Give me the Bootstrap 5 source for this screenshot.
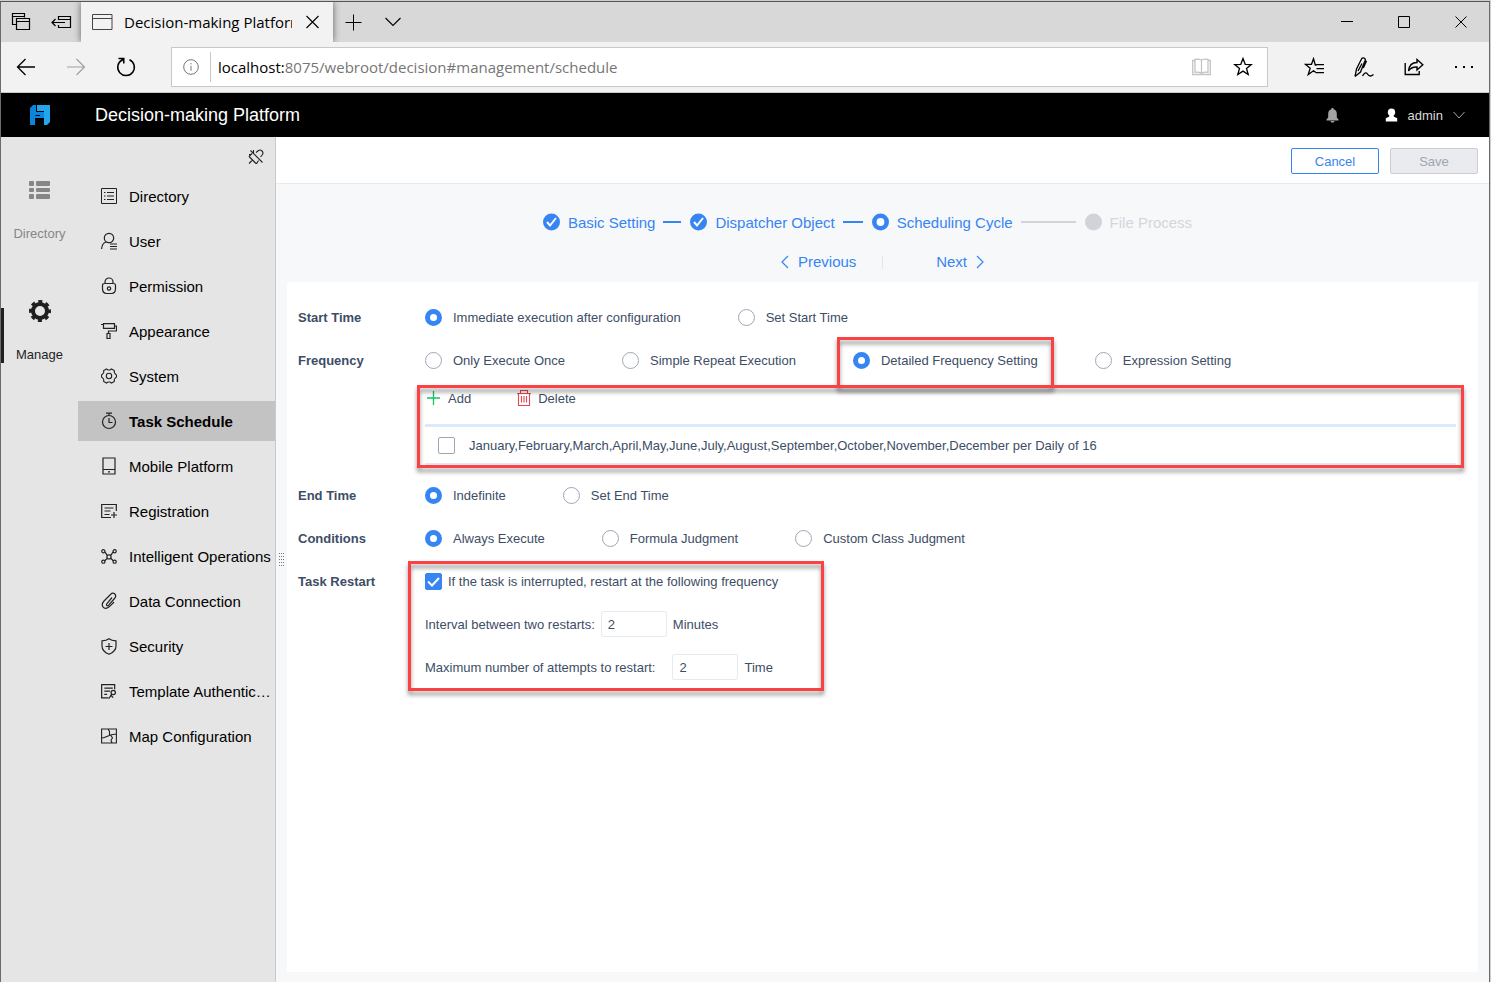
<!DOCTYPE html>
<html lang="en">
<head>
<meta charset="utf-8">
<meta name="viewport" content="width=device-width, initial-scale=1">
<title>Decision-making Platform</title>
<link href="https://cdn.jsdelivr.net/npm/bootstrap@5.3.0/dist/css/bootstrap.min.css" rel="stylesheet">
<style>
  :root { --blue: #3685f2; --ink: #3d4d66; --frame: #6b6b6b; }
  body { font-family: "Liberation Sans", Arial, sans-serif; font-size: 13px; line-height: 21px; color: var(--ink); background: #cfd0ce; padding: 1px 1px 0 0; }
  svg { display: block; flex: none; }
  svg:not([fill]) { fill: none; }
  svg:not([stroke]) { stroke: currentColor; }
  button { color: inherit; font: inherit; }
  .bare { background: none; border: 0; padding: 0; display: flex; align-items: center; justify-content: center; }
  .app-window { border: 1px solid var(--frame); border-top-color: #555; border-bottom: 0; }
  /* browser chrome */
  .chrome { font-family: "Open Sans", "Noto Sans", sans-serif; color: #000; }
  .tab-strip { background: #d8d8d8; height: 40px; }
  .tab-tools { width: 80px; }
  .tab-tools .bare { width: 40px; }
  .page-tab { width: 252px; background: #f2f2f2; box-shadow: 0 0 7px rgba(0,0,0,.55); clip-path: inset(0 -8px); padding: 0 13px 0 11px; font-size: 15px; }
  .page-tab .tab-title { flex: 1 1 0; min-width: 0; overflow: hidden; white-space: nowrap; margin: 0 13px 0 11px; }
  .strip-btn { width: 40px; }
  .win-btn { width: 57px; }
  .tool-bar { background: #f2f2f2; height: 51px; border-bottom: 1px solid #c8c8c8; }
  .nav-btn { width: 50px; }
  .address { border: 1px solid #c8c8c8; background: #fff; height: 40px; margin-left: 20px; margin-right: 21px; font-size: 15px; }
  .address .info { width: 39px; height: 30px; border-right: 1px solid #c8c8c8; color: #767676; margin-right: 7px; }
  .address input { border: 0; outline: 0; padding: 0; color: #767676; flex: 1 1 0; min-width: 0; background: none; }
  .address .bare { width: 41px; }
  /* application */
  .app-bar { background: #000; color: #fff; height: 44px; padding: 0 24px 0 29px; }
  .app-bar h1 { font-size: 18px; line-height: 24px; margin: 0 0 0 44px; }
  .bell { margin-right: 46px; }
  .user-menu { color: #d9d9d9; gap: 10px; }
  .rail { width: 77px; background: #e5e5e5; padding-top: 41px; gap: 55px; }
  .rail a { color: #868686; gap: 21px; text-decoration: none; position: relative; }
  .rail a.active { color: #1f1f1f; }
  .rail a.active::before { content: ""; position: absolute; left: 0; top: 9px; width: 3px; height: 55px; background: #1f1f1f; }
  .side { width: 198px; background: #e5e5e5; border-right: 1px solid #c9c9c9; }
  .side-head { height: 39px; padding-right: 11px; }
  .side ul { gap: 5px; }
  .side li a { height: 40px; padding-left: 23px; gap: 12px; font-size: 15px; color: #000; text-decoration: none; white-space: nowrap; }
  .side li a svg { color: #222; }
  .side li a.active { background: #c3c3c3; font-weight: bold; }
  .content-area { background: #f7f8fa; position: relative; }
  .grip { position: absolute; left: 2px; top: 416px; color: #777; }
  .action-bar { background: #fff; height: 47px; border-bottom: 1px solid #e8eaed; padding: 2px 11px 0 0; gap: 11px; }
  .action-bar .btn { width: 88px; height: 26px; padding: 0; font-size: 13px; line-height: 25px; border-radius: 2px; }
  .btn-cancel { color: var(--blue); border: 1px solid var(--blue); background: #fff; }
  .btn-save, .btn-save:disabled { color: #9ea6b2; border: 1px solid #ccced6; background: #eaebef; opacity: 1; }
  .steps { padding: 24px 30px 0 0; font-size: 15px; color: var(--blue); }
  .steps li { height: 28px; gap: 8px; }
  .steps .link-line { height: 2px; background: var(--blue); margin: 0 9px 0 8px; }
  .line-s { width: 18px; } .line-m { width: 20px; } .line-l { width: 55px; }
  .steps .todo { color: #d3d6dc; }
  .steps .link-line.line-l { background: #d0d3da; }
  .pager { margin: 12px 0 6px; font-size: 15px; color: var(--blue); }
  .pager .bare { width: 102px; height: 28px; gap: 9px; line-height: 24px; }
  .pager .rule { width: 1px; height: 13px; background: #e3e5e9; }
  .sheet { background: #fff; margin: 0 11px 10px; padding: 22px 22px 22px 11px; }
  .form-rows { gap: 17px; }
  .f-row > .f-label { width: 127px; font-weight: bold; line-height: 27px; height: 26px; flex: none; }
  .f-line { height: 26px; }
  .opts { gap: 57px; }
  .opt { gap: 11px; position: relative; white-space: nowrap; }
  input[type=radio], input[type=checkbox] { appearance: none; margin: 0; width: 17px; height: 17px; border: 1px solid #9ea6b5; background: #fff center/100% no-repeat; flex: none; }
  input[type=radio] { border-radius: 50%; }
  input[type=radio]:checked { border: 5px solid var(--blue); }
  input[type=checkbox] { border-radius: 2px; }
  input[type=checkbox]:checked { border-color: var(--blue); background-color: var(--blue); background-image: url("data:image/svg+xml,%3Csvg xmlns='http://www.w3.org/2000/svg' viewBox='0 0 15 15'%3E%3Cpath d='M2 7.5l4 4L13 4' fill='none' stroke='white' stroke-width='2'/%3E%3C/svg%3E"); }
  .freq-list { margin-top: 12px; position: relative; }
  .freq-tools { height: 26px; margin-bottom: 13px; gap: 45px; }
  .freq-tools .bare { gap: 6px; }
  .freq-item { border-top: 3px solid #dce9fb; border-bottom: 2px solid #dce9fb; height: 41px; padding-left: 13px; gap: 14px; }
  .restart { position: relative; gap: 17px; }
  .restart .f-line { gap: 6px; }
  .restart .wide-colon { margin-right: 11px; }
  .num { width: 66px; height: 26px; border: 1px solid #e8eaed; border-radius: 2px; padding: 0 6px; color: var(--ink); font-size: 13px; }
  /* callout frames laid over the form */
  .callout { position: absolute; border: 3px solid #fb4141; pointer-events: none; filter: drop-shadow(0 4px 2px rgba(0,0,0,.42)); z-index: 2; }
  .callout-option { inset: -13px -16px -17px -16px; }
  .callout-list { inset: 0 -8px -3px -8px; }
  .callout-restart { inset: -7px -46px -11px -17px; }
</style>
</head>
<body class="min-vh-100 d-flex flex-column">
<div class="app-window flex-grow-1 d-flex flex-column">
  <div class="chrome">
    <div class="tab-strip d-flex">
      <div class="tab-tools d-flex">
        <button class="bare" aria-label="Tabs set aside"><svg width="20" height="20" viewBox="0 0 20 20" stroke-width="1.2"><path d="M5.500 12.500h-4v-11h12v4M1.500 4.500h12M5.500 6.500h13v11h-13zM5.500 9.500h13"/></svg></button>
        <button class="bare" aria-label="Set tabs aside"><svg width="22" height="20" viewBox="0 0 22 20" stroke-width="1.2"><path d="M8.500 8V4.500h12v11h-12V13M8.500 7.500h12M15 10.500H2M5.500 7L2 10.500 5.500 14"/></svg></button>
      </div>
      <div class="page-tab d-flex align-items-center">
        <svg width="21" height="18" viewBox="0 0 21 18" stroke="#444"><path d="M.5 1.500h19.500v15H.5zM.5 5.500h19.500"/></svg>
        <span class="tab-title">Decision-making Platform</span>
        <button class="bare" aria-label="Close tab"><svg width="15" height="14" viewBox="0 0 15 14" stroke-width="1.100"><path d="M1.500 1l12 12M13.500 1l-12 12"/></svg></button>
      </div>
      <button class="bare strip-btn" aria-label="New tab"><svg width="17" height="17" viewBox="0 0 17 17"><path d="M8.500.5v16M.5 8.500h16"/></svg></button>
      <button class="bare strip-btn" aria-label="Tab previews"><svg width="16" height="10" viewBox="0 0 16 10" stroke-width="1.100"><path d="M.5 1L8 8.500 15.500 1"/></svg></button>
      <div class="ms-auto d-flex">
        <button class="bare win-btn" aria-label="Minimize"><svg width="12" height="12" viewBox="0 0 12 12"><path d="M0 5.500h12"/></svg></button>
        <button class="bare win-btn" aria-label="Maximize"><svg width="12" height="12" viewBox="0 0 12 12"><path d="M.5.5h11v11H.5z"/></svg></button>
        <button class="bare win-btn" aria-label="Close"><svg width="12" height="12" viewBox="0 0 12 12"><path d="M.5.5l11 11M11.500.5l-11 11"/></svg></button>
      </div>
    </div>
    <div class="tool-bar d-flex align-items-center">
      <button class="bare nav-btn" aria-label="Back"><svg width="20" height="18" viewBox="0 0 20 18" stroke-width="1.300"><path d="M19 9H1.500M9.500 1l-8 8 8 8"/></svg></button>
      <button class="bare nav-btn" aria-label="Forward"><svg width="20" height="18" viewBox="0 0 20 18" stroke="#a0a0a0" stroke-width="1.200"><path d="M1 9h17.500M10.500 1l8 8-8 8"/></svg></button>
      <button class="bare nav-btn" aria-label="Refresh"><svg width="20" height="20" viewBox="0 0 20 20" stroke-width="1.500"><path d="M13.500 2.700a8.300 8.300 0 1 1-7.500.3M2.500 1.500h5.300v5M7.500 1.800L5.500 4"/></svg></button>
      <div class="address flex-grow-1 d-flex align-items-center">
        <div class="info d-flex align-items-center justify-content-center"><svg width="16" height="16" viewBox="0 0 16 16"><circle cx="8" cy="8" r="7.300"/><path d="M8 6.800v5M8 4v1.400"/></svg></div>
        <label for="url">localhost:</label><input id="url" type="text" value="8075/webroot/decision#management/schedule">
        <button class="bare" aria-label="Reading view"><svg width="19" height="18" viewBox="0 0 19 18" stroke="#c4c4c4" stroke-width="1.300"><path d="M9.500 2.500v13M9.500 2C7.500 1 5 1 3 1.500v12.800c2.500-.4 4.500-.1 6.500.9 2-1 4-1.300 6.500-.9V1.500C14 1 11.500 1 9.500 2zM3 2.500H.7v14h17.600v-14H16"/></svg></button>
        <button class="bare me-1" aria-label="Add to favorites"><svg width="20" height="20" viewBox="0 0 20 20" stroke-width="1.300"><path d="M10 1.500l2.200 5.800 6.100.3-4.800 3.900 1.700 6-5.200-3.400-5.200 3.400 1.700-6-4.800-3.900 6.100-.3z"/></svg></button>
      </div>
      <button class="bare nav-btn" aria-label="Hub"><svg width="21" height="20" viewBox="0 0 21 20" stroke-width="1.300"><path d="M12.500 8h-1.200L9.500 1.700 7.500 7.300H1.300l4.900 4-2 6.200 5.300-3.800 2 1.400M11 7.700h9M12.500 11.700H20M11.500 15.700H20"/></svg></button>
      <button class="bare nav-btn" aria-label="Notes"><svg width="22" height="22" viewBox="0 0 22 22" stroke-width="1.300"><path d="M2 20.500L3.500 13 8.500 3c1-2 4.500-1 3.700 1.200L7.500 16 2 20.500M9 7.500L5 15M12 4.500l1.300 1-3 6.500M9.500 20c2-3.500 4-4 5-2s3 3 6 .5"/></svg></button>
      <button class="bare nav-btn" aria-label="Share"><svg width="20" height="20" viewBox="0 0 20 20" stroke-width="1.400"><path d="M1.200 6v11.500h14V14M13 2.500l5.800 5.200L13 13v-3c-4-.2-6.500.8-8.500 4C5 9 8 5.500 13 5.500z"/></svg></button>
      <button class="bare nav-btn" aria-label="More"><svg width="20" height="4" viewBox="0 0 20 4" fill="currentColor" stroke="none"><path d="M1 1h2v2H1zM9 1h2v2H9zM17 1h2v2h-2z"/></svg></button>
    </div>
  </div>

  <header class="app-bar d-flex align-items-center">
    <svg width="21" height="20" viewBox="0 0 21 20" stroke="none"><path d="M3 0h3v6h8v7H5v7H0V3z" fill="#0a84dc"/><path d="M7 0h13v17l-3 3h-3V6H7z" fill="#22a7ea"/><path d="M6.500 0v6.500H14M5.500 10.500H10" fill="none" stroke="#000"/></svg>
    <h1>Decision-making Platform</h1>
    <button class="bare bell ms-auto" aria-label="Notifications"><svg width="13" height="15" viewBox="0 0 13 15" fill="#a4a4a4" stroke="none"><path d="M6.500 0c.8 0 1.200.5 1.200 1.200C10 2 10.800 3.500 10.800 6v3.500l1.700 2V12.500H.5v-1l1.700-2V6c0-2.500.8-4 3.100-4.800C5.300.5 5.700 0 6.500 0zM4.500 13h4c-.3 2-3.700 2-4 0z"/></svg></button>
    <button class="bare user-menu"><svg width="13" height="14" viewBox="0 0 13 14" fill="#fff" stroke="none"><path d="M6.500.5c2.500 0 3.700 1.500 3.700 3.700 0 1.700-.7 2.700-1.500 3.400v.9l3.500 1.800v3.200H.8v-3.200l3.500-1.800v-.9C3.500 6.900 2.800 5.900 2.800 4.200 2.800 2 4 .5 6.500.5z"/></svg><span>admin</span><svg width="12" height="8" viewBox="0 0 12 8" stroke="#a4a4a4"><path d="M.5 1L6 7l5.500-6"/></svg></button>
  </header>

  <div class="flex-grow-1 d-flex">
    <nav class="rail d-flex flex-column flex-shrink-0" aria-label="Main">
      <a href="#directory" class="d-flex flex-column align-items-center"><svg width="22" height="24" viewBox="0 0 22 24" fill="currentColor" stroke="none"><rect x="0" y="3" width="5" height="5" rx="1"/><rect x="7" y="3" width="14" height="5" rx="1"/><rect x="0" y="10" width="5" height="4" rx="1"/><rect x="7" y="10" width="14" height="4" rx="1"/><rect x="0" y="16" width="5" height="5" rx="1"/><rect x="7" y="16" width="14" height="5" rx="1"/></svg><span>Directory</span></a>
      <a href="#management" class="active d-flex flex-column align-items-center"><svg width="24" height="24" viewBox="0 0 24 24"><circle cx="12" cy="12" r="7" stroke-width="4"/><circle cx="12" cy="12" r="9.500" stroke-width="3" stroke-dasharray="4 3.460" stroke-dashoffset="2"/></svg><span>Manage</span></a>
    </nav>
    <nav class="side flex-shrink-0" aria-label="Management">
      <div class="side-head d-flex align-items-center justify-content-end"><button class="bare" aria-label="Unpin menu"><svg width="16" height="16" viewBox="0 0 16 16" stroke="#222" stroke-width="1.1"><path d="M8 3.500L10.500 1.500c2.500-1.500 5.500 1.500 4 4L12.500 8M4 4.500L1.500 7c-.5.500 0 1 .5 1.500l5.500 5.500c.5.500 1 .5 1.500 0l1.500-2.500M4.500 11L1 14.500M2.500 1.500l12 12M5.500 1v3M1 5.500h2"/></svg></button></div>
      <ul class="list-unstyled d-flex flex-column mb-0">
        <li><a class="d-flex align-items-center" href="#"><svg width="16" height="16" viewBox="0 0 16 16"><path d="M.5.5h15v15H.5zM3 4.500h1.500M3 8h1.500M3 11.500h1.500M6 4.500h7M6 8h7M6 11.500h7"/></svg>Directory</a></li>
        <li><a class="d-flex align-items-center" href="#"><svg width="16" height="18" viewBox="0 0 16 18" stroke-width="1.200"><circle cx="8" cy="6" r="4.700"/><path d="M5 10C2 11 .8 13.500.6 17M9 12h7M9 14.500h7M9 17h7"/></svg>User</a></li>
        <li><a class="d-flex align-items-center" href="#"><svg width="16" height="18" viewBox="0 0 16 18" stroke-width="1.200"><path d="M4 6.500V5a4 4 0 0 1 8 0v1.500M3.500 6.500h9c1.500 0 2 .5 2 2v3c0 3-1.500 5-4 5h-5c-2.500 0-4-2-4-5v-3c0-1.500.5-2 2-2z"/><circle cx="8" cy="11.500" r="1.700"/></svg>Permission</a></li>
        <li><a class="d-flex align-items-center" href="#"><svg width="16" height="16" viewBox="0 0 16 16" stroke-width="1.200"><path d="M2.500.7h11v4.600h-11zM0 1.500h2.500M13.500 3h2v5h-8v2.500M6 10.500h3v5H6z"/></svg>Appearance</a></li>
        <li><a class="d-flex align-items-center" href="#"><svg width="16" height="16" viewBox="0 0 16 16" stroke-width="1.100"><path d="M5.500 1L7 2h2l1.500-1 2.800 1.500v2l1 1.500 1.200 1v2l-1.200 1-1 1.500v2L10.500 15 9 14H7l-1.500 1-2.800-1.500v-2L1.700 10 .5 9V7l1.200-1 1-1.500v-2z"/><circle cx="8" cy="8" r="2.700"/></svg>System</a></li>
        <li><a class="d-flex align-items-center active" href="#" aria-current="page"><svg width="16" height="18" viewBox="0 0 16 18" stroke-width="1.200"><circle cx="8" cy="10" r="6.500"/><path d="M5 1.200h6M8 1.200v2M8 6v4.500h3.500"/></svg>Task Schedule</a></li>
        <li><a class="d-flex align-items-center" href="#"><svg width="16" height="18" viewBox="0 0 16 18" stroke-width="1.200"><path d="M2 1h12v16H2zM2 12.500h12M7 14.800h2"/></svg>Mobile Platform</a></li>
        <li><a class="d-flex align-items-center" href="#"><svg width="16" height="16" viewBox="0 0 16 16" stroke-width="1.200"><path d="M15.300 8V1.500H.7v13H10M3.500 5h9M3.500 8h6M3.500 11.500h5M13 9v6M10 12h6"/></svg>Registration</a></li>
        <li><a class="d-flex align-items-center" href="#"><svg width="16" height="18" viewBox="0 0 17 18" stroke-width="1.300"><circle cx="2.500" cy="4" r="1.700"/><circle cx="14.500" cy="4" r="1.700"/><circle cx="2.500" cy="15" r="1.700"/><circle cx="14.500" cy="15" r="1.700"/><circle cx="8.500" cy="10" r="2.200"/><path d="M4 5c1 0 1.500 2.500 3 3.500M13 5c-1 0-1.500 2.500-3 3.500M4 14l2.500-2.500M13 14l-2.500-2.500"/></svg>Intelligent Operations</a></li>
        <li><a class="d-flex align-items-center" href="#"><svg width="16" height="18" viewBox="0 0 16 18" stroke-width="1.200"><path d="M11 5.500l-5 6c-1.500 2 .5 3 1.700 1.700l5.800-6.700c3-3.500-1-7-4-4L3 9C-1 13.500 3 18 7 15.500c2-1 4-3.500 6-5.500"/></svg>Data Connection</a></li>
        <li><a class="d-flex align-items-center" href="#"><svg width="16" height="17" viewBox="0 0 16 17" stroke-width="1.200"><path d="M8 .8c2 1.600 4.500 2 7 2V8c0 4-2.500 6.500-7 8.200C3.500 14.500 1 12 1 8V2.800c2.500 0 5-.4 7-2zM8 5v7M4.500 8.500h7"/></svg>Security</a></li>
        <li><a class="d-flex align-items-center" href="#"><svg width="16" height="17" viewBox="0 0 17 17" stroke-width="1.300"><path d="M14.500 6V1.200H.7v14H8M3.500 5h9M3.500 8.200h6M3.500 11.500h3M11.500 11l-3 5M11 13l2 2"/><circle cx="13" cy="9.500" r="2.300"/></svg>Template Authentic…</a></li>
        <li><a class="d-flex align-items-center" href="#"><svg width="16" height="16" viewBox="0 0 16 16" stroke-width="1.100"><path d="M.6 1h14.800v14H.6zM.6 10c4 0 6-3.500 14.800-4M7 1l1.500 2.500v3.500M10 7.500l1.500 2.500-1.500 2 1 3"/></svg>Map Configuration</a></li>
      </ul>
    </nav>

    <main class="content-area flex-grow-1 d-flex flex-column">
      <svg class="grip" width="7" height="14" viewBox="0 0 7 14" stroke-dasharray="1 2"><path d="M1.500 0v14M3.500 0v14M5.500 0v14"/></svg>
      <div class="action-bar d-flex align-items-center justify-content-end">
        <button class="btn btn-cancel">Cancel</button>
        <button class="btn btn-save" disabled>Save</button>
      </div>
      <ol class="steps list-unstyled d-flex justify-content-center align-items-center mb-0">
        <li class="d-flex align-items-center"><svg width="17" height="18" viewBox="0 0 17 18"><circle cx="8.500" cy="9" r="8.500" fill="#3685f2" stroke="none"/><path d="M4 9l3 3.500L13 5" stroke="#fff" stroke-width="2"/></svg>Basic Setting</li>
        <li class="link-line line-s" aria-hidden="true"></li>
        <li class="d-flex align-items-center"><svg width="17" height="18" viewBox="0 0 17 18"><circle cx="8.500" cy="9" r="8.500" fill="#3685f2" stroke="none"/><path d="M4 9l3 3.500L13 5" stroke="#fff" stroke-width="2"/></svg>Dispatcher Object</li>
        <li class="link-line line-m" aria-hidden="true"></li>
        <li class="d-flex align-items-center"><svg width="17" height="18" viewBox="0 0 17 18"><circle cx="8.500" cy="9" r="6.200" fill="#fff" stroke="#3685f2" stroke-width="4.600"/></svg>Scheduling Cycle</li>
        <li class="link-line line-l" aria-hidden="true"></li>
        <li class="d-flex align-items-center todo"><svg width="17" height="18" viewBox="0 0 17 18"><circle cx="8.500" cy="9" r="8.500" fill="#d0d3da" stroke="none"/></svg>File Process</li>
      </ol>
      <div class="pager d-flex justify-content-center align-items-center">
        <button class="bare justify-content-start"><svg width="9" height="14" viewBox="0 0 9 14" stroke-width="1.200"><path d="M8 1L2 7l6 6"/></svg>Previous</button>
        <span class="rule"></span>
        <button class="bare justify-content-end">Next<svg width="9" height="14" viewBox="0 0 9 14" stroke-width="1.200"><path d="M1 1l6 6-6 6"/></svg></button>
      </div>
      <form class="sheet flex-grow-1">
        <div class="form-rows d-flex flex-column">
          <div class="f-row d-flex"><div class="f-label">Start Time</div>
            <div class="f-line opts d-flex align-items-center">
              <label class="opt d-flex align-items-center"><input type="radio" name="start" checked>Immediate execution after configuration</label>
              <label class="opt d-flex align-items-center"><input type="radio" name="start">Set Start Time</label>
            </div></div>
          <div class="f-row d-flex"><div class="f-label">Frequency</div>
            <div class="flex-grow-1">
              <div class="f-line opts d-flex align-items-center">
                <label class="opt d-flex align-items-center"><input type="radio" name="freq">Only Execute Once</label>
                <label class="opt d-flex align-items-center"><input type="radio" name="freq">Simple Repeat Execution</label>
                <label class="opt d-flex align-items-center"><input type="radio" name="freq" checked>Detailed Frequency Setting<span class="callout callout-option"></span></label>
                <label class="opt d-flex align-items-center"><input type="radio" name="freq">Expression Setting</label>
              </div>
              <div class="freq-list">
                <div class="freq-tools d-flex align-items-center">
                  <button type="button" class="bare"><svg width="17" height="14" viewBox="0 0 17 14" stroke="#12c463" stroke-width="1.300"><path d="M8.500 0v14M2 7h13"/></svg>Add</button>
                  <button type="button" class="bare"><svg width="16" height="16" viewBox="0 0 16 16" stroke="#e5484d" stroke-width="1.100"><path d="M1 3.500h14M4.500 3.500v-3h7v3M2.500 3.500v12h11v-12M5.500 6v6.500M8 6v6.500M10.500 6v6.500"/></svg>Delete</button>
                </div>
                <label class="freq-item d-flex align-items-center"><input type="checkbox">January,February,March,April,May,June,July,August,September,October,November,December per Daily of 16</label>
                <span class="callout callout-list"></span>
              </div>
            </div></div>
          <div class="f-row d-flex"><div class="f-label">End Time</div>
            <div class="f-line opts d-flex align-items-center">
              <label class="opt d-flex align-items-center"><input type="radio" name="end" checked>Indefinite</label>
              <label class="opt d-flex align-items-center"><input type="radio" name="end">Set End Time</label>
            </div></div>
          <div class="f-row d-flex"><div class="f-label">Conditions</div>
            <div class="f-line opts d-flex align-items-center">
              <label class="opt d-flex align-items-center"><input type="radio" name="cond" checked>Always Execute</label>
              <label class="opt d-flex align-items-center"><input type="radio" name="cond">Formula Judgment</label>
              <label class="opt d-flex align-items-center"><input type="radio" name="cond">Custom Class Judgment</label>
            </div></div>
          <div class="f-row d-flex"><div class="f-label">Task Restart</div>
            <div class="restart d-flex flex-column">
              <label class="f-line d-flex align-items-center"><input type="checkbox" checked>If the task is interrupted, restart at the following frequency</label>
              <div class="f-line d-flex align-items-center"><label for="interval">Interval between two restarts:</label><input class="num" id="interval" type="text" value="2"><span>Minutes</span></div>
              <div class="f-line d-flex align-items-center"><label for="attempts" class="wide-colon">Maximum number of attempts to restart:</label><input class="num" id="attempts" type="text" value="2"><span>Time</span></div>
              <span class="callout callout-restart"></span>
            </div></div>
        </div>
      </form>
    </main>
  </div>
</div>
<script src="https://cdn.jsdelivr.net/npm/bootstrap@5.3.0/dist/js/bootstrap.bundle.min.js"></script>
</body>
</html>
